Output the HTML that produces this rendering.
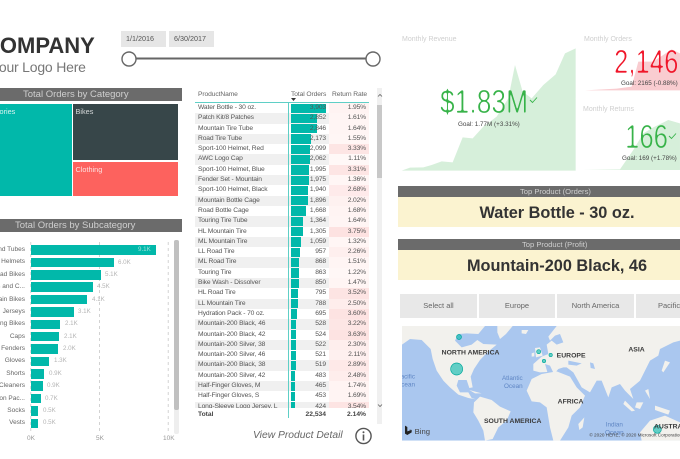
<!DOCTYPE html>
<html><head><meta charset="utf-8">
<style>
html,body{margin:0;padding:0;background:#fff;}
body{width:680px;height:459px;overflow:hidden;position:relative;font-family:"Liberation Sans",sans-serif;color:#555;}
.a{position:absolute;white-space:nowrap;}
.hd{position:absolute;background:#6b6b6b;color:#cfcfcf;text-align:center;overflow:hidden;white-space:nowrap;}
.r{position:relative;height:10.31px;font-size:6.7px;letter-spacing:-.13px;line-height:10.31px;color:#555;}
.s{background:linear-gradient(to right,#f0f0f0 134px,transparent 134px);}
.r i{position:absolute;left:96px;top:.5px;height:9.3px;background:#01b8aa;}
.r b{position:absolute;left:0;font-weight:normal;padding-left:3px;}
.r u{position:absolute;right:43px;text-decoration:none;}
.r em{position:absolute;left:134px;width:40px;top:0;height:10.31px;text-align:right;font-style:normal;}
.r em span{padding-right:3px;}
.sl{position:absolute;font-size:6.5px;color:#666;right:655px;white-space:nowrap;}
.bar{position:absolute;left:31px;height:9.6px;background:#01b8aa;}
.vl{position:absolute;font-size:6.2px;color:#b5b5b5;white-space:nowrap;}
.btn{position:absolute;top:294px;height:24px;background:#e8e8e8;font-size:7.5px;line-height:24px;text-align:center;color:#666;overflow:hidden;white-space:nowrap;}
.big{filter:url(#thin);transform-origin:left center;}
</style></head>
<body>
<svg width="0" height="0" style="position:absolute"><filter id="thin" x="-5%" y="-5%" width="110%" height="110%"><feGaussianBlur stdDeviation="0.7"/><feComponentTransfer><feFuncA type="linear" slope="4" intercept="-2.2"/></feComponentTransfer></filter></svg>

<!-- logo -->
<div class="a" style="left:-16px;top:33px;font-size:22px;font-weight:bold;color:#333;line-height:26px;">COMPANY</div>
<div class="a" style="left:-9px;top:58px;font-size:14px;color:#777;line-height:18px;letter-spacing:-.2px;">Your Logo Here</div>

<!-- dates / slider -->
<div class="a" style="left:121px;top:31px;width:45px;height:16px;background:#e6e6e6;font-size:7.2px;line-height:16px;text-indent:5px;color:#555;">1/1/2016</div>
<div class="a" style="left:169px;top:31px;width:45px;height:16px;background:#e6e6e6;font-size:7.2px;line-height:16px;text-indent:5px;color:#555;">6/30/2017</div>
<svg class="a" style="left:115px;top:48px" width="270" height="22"><line x1="14" y1="10.5" x2="258" y2="10.5" stroke="#666" stroke-width="2"/><circle cx="14" cy="11" r="7" fill="#fff" stroke="#666" stroke-width="1.4"/><circle cx="258" cy="11" r="7" fill="#fff" stroke="#666" stroke-width="1.4"/></svg>

<!-- treemap -->
<div class="a" style="left:0;top:88px;width:182px;height:12.5px;background:#6b6b6b;"></div>
<div class="a" style="left:23px;top:88px;font-size:9.5px;line-height:13px;color:#cfcfcf;">Total Orders by Category</div>
<div class="a" style="left:-60px;top:104px;width:132px;height:92px;background:#01b8aa;color:#d8f3f0;font-size:7.3px;"><span class="a" style="left:36px;top:3px;">Accessories</span></div>
<div class="a" style="left:73px;top:104px;width:105px;height:56px;background:#374649;color:#d5d8d9;font-size:7.3px;"><span class="a" style="left:2.5px;top:3px;">Bikes</span></div>
<div class="a" style="left:73px;top:162px;width:105px;height:34px;background:#fd625e;color:#fde0df;font-size:7.3px;"><span class="a" style="left:2.5px;top:3px;">Clothing</span></div>

<!-- bars -->
<div class="a" style="left:0;top:219px;width:182px;height:13px;background:#6b6b6b;"></div>
<div class="a" style="left:15px;top:219px;font-size:9.5px;line-height:13px;color:#cfcfcf;">Total Orders by Subcategory</div>
<svg class="a" style="left:0;top:240px" width="182" height="195"><g stroke="#c8c8c8" stroke-width=".8" stroke-dasharray="3 3"><line x1="30.8" y1="2" x2="30.8" y2="192"/><line x1="99.5" y1="2" x2="99.5" y2="192"/><line x1="168.2" y1="2" x2="168.2" y2="192"/></g></svg>
<div class="bar" style="top:245.3px;width:124.7px"></div>
<div class="bar" style="top:257.7px;width:82.7px"></div>
<div class="bar" style="top:270px;width:69.7px"></div>
<div class="bar" style="top:282.4px;width:61.7px"></div>
<div class="bar" style="top:294.8px;width:56.3px"></div>
<div class="bar" style="top:307.2px;width:42.7px"></div>
<div class="bar" style="top:319.5px;width:29.3px"></div>
<div class="bar" style="top:331.9px;width:28.3px"></div>
<div class="bar" style="top:344.3px;width:27px"></div>
<div class="bar" style="top:356.6px;width:18.3px"></div>
<div class="bar" style="top:369px;width:13px"></div>
<div class="bar" style="top:381.4px;width:11.7px"></div>
<div class="bar" style="top:393.8px;width:9.7px"></div>
<div class="bar" style="top:406.1px;width:7.3px"></div>
<div class="bar" style="top:418.5px;width:7px"></div>
<div class="sl" style="top:246px">Tires and Tubes</div>
<div class="sl" style="top:258.4px">Helmets</div>
<div class="sl" style="top:270.7px">Road Bikes</div>
<div class="sl" style="top:283px">Bottles and C...</div>
<div class="sl" style="top:295.5px">Mountain Bikes</div>
<div class="sl" style="top:307.9px">Jerseys</div>
<div class="sl" style="top:320.2px">Touring Bikes</div>
<div class="sl" style="top:332.6px">Caps</div>
<div class="sl" style="top:345px">Fenders</div>
<div class="sl" style="top:357.3px">Gloves</div>
<div class="sl" style="top:369.7px">Shorts</div>
<div class="sl" style="top:382px">Cleaners</div>
<div class="sl" style="top:394.5px">Hydration Pac...</div>
<div class="sl" style="top:406.8px">Socks</div>
<div class="sl" style="top:419.2px">Vests</div>
<div class="vl" style="left:138px;top:246px;color:#9fe0da">9.1K</div>
<div class="vl" style="left:118px;top:258.5px">6.0K</div>
<div class="vl" style="left:105px;top:270.8px">5.1K</div>
<div class="vl" style="left:97px;top:283.2px">4.5K</div>
<div class="vl" style="left:92px;top:295.6px">4.1K</div>
<div class="vl" style="left:78px;top:308px">3.1K</div>
<div class="vl" style="left:65px;top:320.3px">2.1K</div>
<div class="vl" style="left:64px;top:332.7px">2.1K</div>
<div class="vl" style="left:63px;top:345.1px">2.0K</div>
<div class="vl" style="left:54px;top:357.4px">1.3K</div>
<div class="vl" style="left:49px;top:369.8px">0.9K</div>
<div class="vl" style="left:47px;top:382.2px">0.9K</div>
<div class="vl" style="left:45px;top:394.6px">0.7K</div>
<div class="vl" style="left:43px;top:406.9px">0.5K</div>
<div class="vl" style="left:43px;top:419.3px">0.5K</div>
<div class="a" style="left:27px;top:435px;font-size:6.5px;color:#999;">0K</div>
<div class="a" style="left:96px;top:435px;font-size:6.5px;color:#999;">5K</div>
<div class="a" style="left:163px;top:435px;font-size:6.5px;color:#999;">10K</div>
<div class="a" style="left:174px;top:240px;width:4.5px;height:194px;background:#eee;border-radius:2px;"></div>
<div class="a" style="left:174px;top:240px;width:4.5px;height:170px;background:#c0c0c0;border-radius:2px;"></div>

<!-- table -->
<div class="a" style="left:198px;top:90.5px;font-size:6.7px;letter-spacing:-.1px;color:#666;">ProductName</div>
<div class="a" style="left:291px;top:90.5px;font-size:6.7px;letter-spacing:-.1px;color:#666;">Total Orders</div>
<div class="a" style="left:332px;top:90.5px;font-size:6.7px;letter-spacing:-.1px;color:#666;">Return Rate</div>
<svg class="a" style="left:291px;top:98px" width="6" height="4"><path d="M0 0H5L2.5 3Z" fill="#333"/></svg>
<div class="a" style="left:195px;top:102px;width:174px;height:1px;background:#5fcfc6;"></div>
<div class="a" style="left:195px;top:103px;width:174px;height:305px;overflow:hidden;">
<div class="r"><b>Water Bottle - 30 oz.</b><i style="width:35px"></i><u>3,903</u><em style="background:#fff3f2"><span>1.95%</span></em></div>
<div class="r s"><b>Patch Kit/8 Patches</b><i style="width:25.6px"></i><u>2,852</u><em style="background:#fff5f4"><span>1.61%</span></em></div>
<div class="r"><b>Mountain Tire Tube</b><i style="width:25.5px"></i><u>2,846</u><em style="background:#fff5f4"><span>1.64%</span></em></div>
<div class="r s"><b>Road Tire Tube</b><i style="width:19.5px"></i><u>2,173</u><em style="background:#fff6f5"><span>1.55%</span></em></div>
<div class="r"><b>Sport-100 Helmet, Red</b><i style="width:18.8px"></i><u>2,099</u><em style="background:#fde5e4"><span>3.33%</span></em></div>
<div class="r s"><b>AWC Logo Cap</b><i style="width:18.5px"></i><u>2,062</u><em style="background:#fff8f7"><span>1.11%</span></em></div>
<div class="r"><b>Sport-100 Helmet, Blue</b><i style="width:17.9px"></i><u>1,995</u><em style="background:#fde5e4"><span>3.31%</span></em></div>
<div class="r s"><b>Fender Set - Mountain</b><i style="width:17.7px"></i><u>1,975</u><em style="background:#fff6f5"><span>1.36%</span></em></div>
<div class="r"><b>Sport-100 Helmet, Black</b><i style="width:17.4px"></i><u>1,940</u><em style="background:#feeaea"><span>2.68%</span></em></div>
<div class="r s"><b>Mountain Bottle Cage</b><i style="width:17px"></i><u>1,896</u><em style="background:#fef1f0"><span>2.02%</span></em></div>
<div class="r"><b>Road Bottle Cage</b><i style="width:15px"></i><u>1,668</u><em style="background:#fff4f3"><span>1.68%</span></em></div>
<div class="r s"><b>Touring Tire Tube</b><i style="width:12.2px"></i><u>1,364</u><em style="background:#fff5f4"><span>1.64%</span></em></div>
<div class="r"><b>HL Mountain Tire</b><i style="width:11.7px"></i><u>1,305</u><em style="background:#fde2e1"><span>3.75%</span></em></div>
<div class="r s"><b>ML Mountain Tire</b><i style="width:9.5px"></i><u>1,059</u><em style="background:#fff6f5"><span>1.32%</span></em></div>
<div class="r"><b>LL Road Tire</b><i style="width:8.6px"></i><u>957</u><em style="background:#feefee"><span>2.26%</span></em></div>
<div class="r s"><b>ML Road Tire</b><i style="width:7.8px"></i><u>868</u><em style="background:#fff5f4"><span>1.51%</span></em></div>
<div class="r"><b>Touring Tire</b><i style="width:7.7px"></i><u>863</u><em style="background:#fff7f6"><span>1.22%</span></em></div>
<div class="r s"><b>Bike Wash - Dissolver</b><i style="width:7.6px"></i><u>850</u><em style="background:#fff5f4"><span>1.47%</span></em></div>
<div class="r"><b>HL Road Tire</b><i style="width:7.1px"></i><u>795</u><em style="background:#fde4e3"><span>3.52%</span></em></div>
<div class="r s"><b>LL Mountain Tire</b><i style="width:7.1px"></i><u>788</u><em style="background:#feedec"><span>2.50%</span></em></div>
<div class="r"><b>Hydration Pack - 70 oz.</b><i style="width:6.2px"></i><u>695</u><em style="background:#fde3e2"><span>3.60%</span></em></div>
<div class="r s"><b>Mountain-200 Black, 46</b><i style="width:4.7px"></i><u>528</u><em style="background:#fde6e5"><span>3.22%</span></em></div>
<div class="r"><b>Mountain-200 Black, 42</b><i style="width:4.7px"></i><u>524</u><em style="background:#fde3e2"><span>3.63%</span></em></div>
<div class="r s"><b>Mountain-200 Silver, 38</b><i style="width:4.7px"></i><u>522</u><em style="background:#feeeed"><span>2.30%</span></em></div>
<div class="r"><b>Mountain-200 Silver, 46</b><i style="width:4.7px"></i><u>521</u><em style="background:#fef0ef"><span>2.11%</span></em></div>
<div class="r s"><b>Mountain-200 Black, 38</b><i style="width:4.7px"></i><u>519</u><em style="background:#fee9e8"><span>2.89%</span></em></div>
<div class="r"><b>Mountain-200 Silver, 42</b><i style="width:4.3px"></i><u>483</u><em style="background:#feedec"><span>2.48%</span></em></div>
<div class="r s"><b>Half-Finger Gloves, M</b><i style="width:4.2px"></i><u>465</u><em style="background:#fff4f3"><span>1.74%</span></em></div>
<div class="r"><b>Half-Finger Gloves, S</b><i style="width:4px"></i><u>453</u><em style="background:#fff4f3"><span>1.69%</span></em></div>
<div class="r s"><b>Long-Sleeve Logo Jersey, L</b><i style="width:3.8px"></i><u>424</u><em style="background:#fde4e3"><span>3.54%</span></em></div>
</div>
<div class="a" style="left:288px;top:103px;width:1px;height:315px;background:#5fcfc6;"></div>
<div class="a" style="left:198px;top:411px;font-size:6.7px;font-weight:bold;color:#444;">Total</div>
<div class="a" style="left:296px;width:30px;text-align:right;top:411px;font-size:6.7px;font-weight:bold;color:#444;">22,534</div>
<div class="a" style="left:336px;width:30px;text-align:right;top:411px;font-size:6.7px;font-weight:bold;color:#444;">2.14%</div>
<div class="a" style="left:377px;top:88px;width:5px;height:336px;background:#f0f0f0;"></div>
<div class="a" style="left:377px;top:105px;width:5px;height:73px;background:#c8c8c8;"></div>
<svg class="a" style="left:377px;top:93px" width="6" height="5"><path d="M1 3.5L3 1.5L5 3.5" fill="none" stroke="#666" stroke-width=".8"/></svg>
<svg class="a" style="left:377px;top:403px" width="6" height="5"><path d="M1 1.5L3 3.5L5 1.5" fill="none" stroke="#666" stroke-width=".8"/></svg>
<div class="a" style="left:253px;top:430px;font-size:10.3px;font-style:italic;color:#666;">View Product Detail</div>
<svg class="a" style="left:355px;top:427px" width="18" height="18"><circle cx="8.5" cy="9" r="7.6" fill="none" stroke="#555" stroke-width="1.4"/><rect x="7.7" y="7.5" width="1.6" height="6" fill="#555"/><circle cx="8.5" cy="5.2" r="1" fill="#555"/></svg>

<!-- KPI -->
<svg class="a" style="left:390px;top:20px" width="290" height="160">
<g transform="scale(.3333)">
<path d="M35,452L60,443L100,442L125,435L155,424L188,427L218,352L248,355L280,320L320,290L355,235L375,135L398,215L425,235L460,195L497,163L525,100L557,85V452Z" fill="#d6efda"/>
<path d="M585,211L680,206L725,200L745,125L790,125L845,88L870,100V211Z" fill="#f9ccd0"/>
<path d="M578,450L690,448L730,390L760,340L790,322L835,300L870,310V450Z" fill="#d6efda"/>
</g></svg>
<div class="a" style="left:402px;top:36px;font-size:7px;color:#cfcfcf;">Monthly Revenue</div>
<div class="a" style="left:584px;top:36px;font-size:7px;color:#cfcfcf;">Monthly Orders</div>
<div class="a" style="left:583px;top:106px;font-size:7px;color:#cfcfcf;">Monthly Returns</div>
<div class="a big" style="left:440px;top:83px;font-size:33px;line-height:38px;color:#37b34a;transform:scaleX(.8);">$1.83M</div>
<div class="a big" style="left:614px;top:43px;font-size:33px;line-height:38px;color:#f0142a;transform:scaleX(.78);">2,146</div>
<div class="a big" style="left:625px;top:118px;font-size:33px;line-height:38px;color:#37b34a;transform:scaleX(.78);">166</div>
<svg class="a" style="left:529px;top:96px" width="9" height="8"><path d="M1 4L3.5 6.5L8 1.5" fill="none" stroke="#37b34a" stroke-width=".9"/></svg>
<svg class="a" style="left:668px;top:132px" width="9" height="8"><path d="M1 4L3.5 6.5L8 1.5" fill="none" stroke="#37b34a" stroke-width=".9"/></svg>
<div class="a" style="left:458px;top:121px;font-size:6.3px;color:#444;">Goal: 1.77M (+3.31%)</div>
<div class="a" style="left:621px;top:80px;font-size:6.3px;color:#444;">Goal: 2165 (-0.88%)</div>
<div class="a" style="left:622px;top:155px;font-size:6.3px;color:#444;">Goal: 169 (+1.78%)</div>

<!-- top product -->
<div class="hd" style="left:398px;top:186px;width:282px;height:11px;font-size:7.6px;line-height:11px;text-align:left;"><span class="a" style="left:122px;">Top Product (Orders)</span></div>
<div class="a" style="left:398px;top:197px;width:282px;height:30px;background:#fbf3d0;"></div>
<div class="a" style="left:478px;width:158px;text-align:center;top:204px;font-size:16.3px;line-height:18px;font-weight:bold;color:#333;">Water Bottle - 30 oz.</div>
<div class="hd" style="left:398px;top:239px;width:282px;height:11px;font-size:7.6px;line-height:11px;text-align:left;"><span class="a" style="left:124px;">Top Product (Profit)</span></div>
<div class="a" style="left:398px;top:250px;width:282px;height:30px;background:#fbf3d0;"></div>
<div class="a" style="left:466px;width:182px;text-align:center;top:256.5px;font-size:16.3px;line-height:18px;font-weight:bold;color:#333;">Mountain-200 Black, 46</div>

<!-- buttons -->
<div class="btn" style="left:400px;width:77px;">Select all</div>
<div class="btn" style="left:479px;width:76px;">Europe</div>
<div class="btn" style="left:557px;width:77px;">North America</div>
<div class="btn" style="left:636px;width:44px;text-align:left;text-indent:22px;">Pacific</div>

<!-- map -->
<svg class="a" style="left:400px;top:324px" width="280" height="120" font-family="Liberation Sans, sans-serif">
<defs><clipPath id="mc"><rect x="6" y="6" width="834" height="344"/></clipPath></defs>
<g transform="scale(.33333)" clip-path="url(#mc)">
<rect x="6" y="6" width="834" height="344" fill="#aac7ef"/>
<g fill="#f2f1ed">
<path d="M6,6H255L235,30L200,28L175,30L165,50L185,70L215,62L232,48L250,60L290,62L262,85L240,108L222,135L212,158L218,190L208,192L200,168L175,168L170,185L180,205L205,205L215,222L228,226L205,222L175,212L150,190L130,170L110,140L98,105L92,75L65,48L30,45L6,62Z"/>
<path d="M292,6H338L318,30L300,45L292,25Z"/>
<path d="M365,18L385,18L378,30L365,28Z"/>
<path d="M208,198L245,208L225,208Z"/>
<path d="M222,235L240,218L275,228L300,248L332,262L320,290L295,310L278,345L255,350L250,320L235,290L220,265Z"/>
<path d="M380,200L395,165L425,150L470,142L510,158L530,190L555,215L540,250L515,275L505,310L480,350L460,350L450,310L440,250L420,235L395,232Z"/>
<path d="M400,120L425,98L445,90L440,62L455,50L470,62L490,55L480,30L465,35L450,50L445,38L470,6H840V50L820,55L780,75L775,95L750,110L730,150L720,170L690,195L700,225L675,200L660,180L635,190L625,220L605,170L590,170L570,205L545,190L520,145L500,130L490,130L475,135L462,150L450,125L435,120L442,144L420,145L400,140Z"/>
<path d="M405,72L420,70L428,95L408,100Z"/>
<path d="M395,88L403,85L403,97L395,98Z"/>
<path d="M720,325L750,290L795,275L840,295V350H725Z"/>
<path d="M535,300L553,280L548,310L538,318Z"/>
<path d="M795,110L810,115L790,145L785,140Z"/>
<path d="M675,230L705,260L695,262L670,240Z"/>
<path d="M710,235L730,235L720,255L705,250Z"/>
<path d="M765,245L810,260L805,272L765,258Z"/>
<path d="M735,200L745,195L750,225Z"/>
</g>
<path d="M505,110L545,118L530,125L505,122Z" fill="#aac7ef"/>
<path d="M570,115L580,118L585,135L572,132Z" fill="#aac7ef"/>
<g fill="#01b8aa" fill-opacity=".6" stroke="#01a89b" stroke-width="2">
<circle cx="170" cy="135" r="18"/><circle cx="177" cy="39" r="7.5"/><circle cx="416" cy="83" r="6"/><circle cx="452" cy="93" r="5"/><circle cx="432" cy="111" r="5"/><circle cx="772" cy="316" r="12"/>
</g>
<g font-size="20.5" font-weight="bold" fill="#3a3a3a">
<text x="125" y="92">NORTH AMERICA</text>
<text x="470" y="101">EUROPE</text>
<text x="685" y="83">ASIA</text>
<text x="473" y="239">AFRICA</text>
<text x="252" y="297">SOUTH AMERICA</text>
<text x="762" y="313">AUSTRALIA</text>
</g>
<g font-size="19" fill="#5f86c4" text-anchor="middle">
<text x="337" y="168">Atlantic</text><text x="340" y="192">Ocean</text>
<text x="643" y="308">Indian</text><text x="643" y="332">Ocean</text>
</g>
<g font-size="19" fill="#5f86c4" text-anchor="end">
<text x="45" y="164">Pacific</text><text x="45" y="188">Ocean</text>
</g>
<path d="M15,305L22,309V322L33,318L24,314L35,318V325L22,333L15,329Z" fill="#222"/>
<text x="44" y="330" font-size="23" fill="#444">Bing</text>
<text x="568" y="338" font-size="14" fill="#444">© 2020 HERE, © 2020 Microsoft Corporation</text>
</g></svg>
</body></html>
